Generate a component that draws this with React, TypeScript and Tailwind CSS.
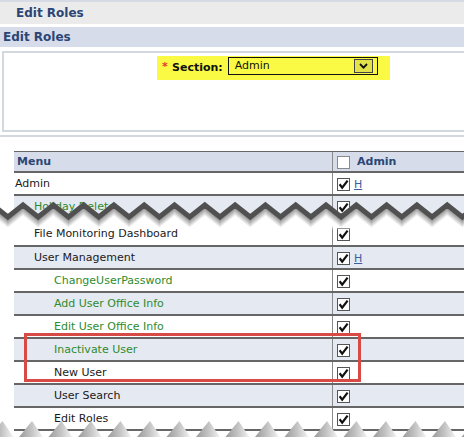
import React from "react";

function Check({ checked = true }: { checked?: boolean }) {
  return (
    <svg width="13" height="13" viewBox="0 0 13 13" className="shrink-0">
      <rect x="0.5" y="0.5" width="12" height="12" fill="#fff" stroke={checked ? "#555" : "#8a8a8a"} />
      {checked && (
        <path d="M2.6 6.3 L5.2 9.6 L10.6 2.6" fill="none" stroke="#111" strokeWidth="2.2" strokeLinejoin="miter" />
      )}
    </svg>
  );
}

type Row = {
  label: string;
  indent: 0 | 1 | 2;
  green?: boolean;
  h?: boolean;
  light?: boolean;
  tall?: boolean;
};

const rows: Row[] = [
  { label: "Admin", indent: 0, h: true },
  { label: "Holiday Delete", indent: 1, green: true, light: true },
  { label: "File Monitoring Dashboard", indent: 1, tall: true },
  { label: "User Management", indent: 1, h: true, light: true },
  { label: "ChangeUserPassword", indent: 2, green: true },
  { label: "Add User Office Info", indent: 2, green: true, light: true },
  { label: "Edit User Office Info", indent: 2, green: true },
  { label: "Inactivate User", indent: 2, green: true, light: true },
  { label: "New User", indent: 2 },
  { label: "User Search", indent: 2, light: true },
  { label: "Edit Roles", indent: 2 },
];

function TopTear() {
  const period = 30.3;
  const first = 23;
  const pts: [number, number][] = [];
  for (let k = -2; k <= 16; k++) {
    const xp = first + period * k;
    pts.push([xp - period / 2, 24]);
    pts.push([xp, 12]);
  }
  const line = (dy: number) => pts.map(([x, y]) => `${x},${y + dy}`).join(" ");
  const fill = `${line(0)} 480,36 -20,36`;
  const shadows = [];
  for (let i = 0; i < 8; i++) {
    shadows.push(
      <polyline
        key={i}
        points={line(6 + i)}
        fill="none"
        stroke="#000"
        strokeOpacity={0.3 * (1 - i / 8)}
        strokeWidth="1.2"
      />
    );
  }
  return (
    <svg className="absolute left-0 top-[190px]" width="464" height="46" viewBox="0 0 464 46">
      <defs>
        <linearGradient id="fade" x1="0" y1="0" x2="0" y2="1">
          <stop offset="0" stopColor="#fff" stopOpacity="1" />
          <stop offset="1" stopColor="#fff" stopOpacity="0" />
        </linearGradient>
      </defs>
      <polygon points={fill} fill="#fff" />
      <rect x="0" y="36" width="464" height="4" fill="url(#fade)" />
      {shadows}
      <polyline points={line(3)} fill="none" stroke="#505050" strokeWidth="5" />
    </svg>
  );
}

function BottomTear() {
  const teeth = [];
  for (let k = -1; k <= 15; k++) {
    const xc = 32 + 29.5 * k;
    teeth.push(
      <polygon key={k} points={`${xc - 13},21 ${xc},5 ${xc + 11},21`} fill="url(#tooth)" />
    );
  }
  return (
    <svg className="absolute left-0 top-[416px]" width="464" height="21" viewBox="0 0 464 21">
      <defs>
        <linearGradient id="tooth" x1="0" y1="0" x2="1" y2="0">
          <stop offset="0" stopColor="#9a9a9a" />
          <stop offset="0.5" stopColor="#c2c2c2" />
          <stop offset="1" stopColor="#f4f4f4" />
        </linearGradient>
      </defs>
      {teeth}
    </svg>
  );
}

export default function App() {
  return (
    <div className="relative w-[464px] h-[437px] overflow-hidden bg-white font-['DejaVu_Sans',sans-serif] text-[11px] text-[#1a1a1a]">
      <div className="h-[2px] bg-[#d5dae4]" />
      <div className="h-[22px] bg-[#ebebeb] flex items-center pl-[16px] text-[12px] font-bold text-[#2b4675]">
        Edit Roles
      </div>
      <div className="h-[3px]" />
      <div className="h-[20px] bg-[#d6dce9] flex items-center pl-[3px] text-[12px] font-bold text-[#2b4675]">
        Edit Roles
      </div>
      <div className="h-[4px]" />
      <div className="ml-[2px] h-[81px] border-l-2 border-t-2 border-b-2 border-[#d3d7de] pt-[3px] pl-[153px]">
        <div className="w-[233px] h-[24px] bg-[#fafa45] flex items-start pt-[1px] pl-[5px]">
          <span className="w-[10px] mt-[2px] text-[#e23a2a] font-bold">*</span>
          <span className="mt-[3px] font-bold text-[#111]">Section:</span>
          <div className="ml-[5px] w-[150px] h-[18px] border border-[#111] flex items-center pl-[6px] pr-[4px]">
            <span className="flex-1 text-[#111]">Admin</span>
            <div className="w-[19px] h-[14px] border border-[#444] bg-[#e2e24a] flex items-center justify-center">
              <svg width="9" height="6" viewBox="0 0 9 6">
                <path d="M1 1 L4.5 4.6 L8 1" fill="none" stroke="#111" strokeWidth="1.8" />
              </svg>
            </div>
          </div>
        </div>
      </div>
      <div className="h-[3px]" />
      <div className="h-[2px] bg-[#d4d8de]" />
      <div className="h-[14px]" />

      <div className="ml-[14px]">
        <div className="flex h-[22px] border-t border-b-2 border-[#666] bg-[#d6dce9]">
          <div className="w-[318px] flex items-center pl-[3px] pt-[1px] font-bold text-[#2b4675]">Menu</div>
          <div className="w-px bg-[#8a8a8a]" />
          <div className="flex-1 flex items-center pl-[4px] gap-[7px] pt-[1px]">
            <Check checked={false} />
            <span className="font-bold text-[#2b4675]">Admin</span>
          </div>
        </div>
        {rows.map((r) => (
          <div
            key={r.label}
            className={`flex border-b-2 border-[#666] ${r.tall ? "h-[28px]" : "h-[23px]"} ${
              r.light ? "bg-[#e5e9f2]" : "bg-white"
            }`}
          >
            <div
              className={`w-[318px] flex ${r.tall ? "items-end pb-[3px]" : "items-center pt-[1px]"} ${
                r.indent === 0 ? "pl-[1px]" : r.indent === 1 ? "pl-[20px]" : "pl-[40px]"
              } ${r.green ? "text-[#2e8b2e]" : "text-[#1a1a1a]"}`}
            >
              {r.label}
            </div>
            <div className="w-px bg-[#8a8a8a]" />
            <div className={`flex-1 flex ${r.tall ? "items-end pb-[4px]" : "items-center pt-[1px]"} pl-[4px] gap-[4px]`}>
              <Check />
              {r.h && <span className="underline text-[#3f5c9c] mt-[3px]">H</span>}
            </div>
          </div>
        ))}
      </div>

      <TopTear />
      <BottomTear />
      <div className="absolute left-[24px] top-[333px] w-[337px] h-[49px] border-[3px] border-[#d84a45]" />
    </div>
  );
}
